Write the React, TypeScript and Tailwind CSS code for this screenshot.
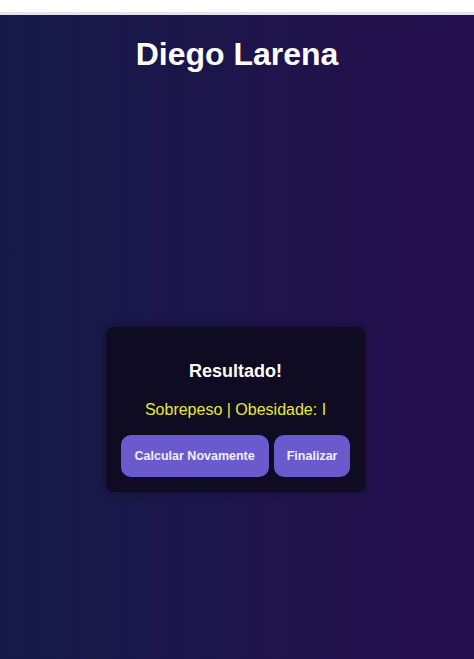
export default function App() {
  return (
    <div className="flex min-h-[659px] flex-col bg-white font-['Liberation_Sans',Arial,sans-serif]">
      <div className="h-[12px] bg-white" />
      <div className="h-[3px] bg-[#e4e4ea]" />
      <main className="flex flex-1 flex-col items-center bg-gradient-to-r from-[#141a48] to-[#250e4e]">
        <h1 className="mt-[21px] text-[32px] font-bold leading-[37px] text-white">Diego Larena</h1>

        <div className="mr-[3px] mt-[254px] flex w-[259px] flex-col items-center rounded-[8px] bg-[#0e0b22] px-[14px] pb-[15px] pt-[34px] shadow-[0_0_8px_rgba(0,0,0,0.35)]">
          <h2 className="text-[18px] font-bold leading-[21px] text-white">Resultado!</h2>
          <p className="mt-[18px] text-[16px] leading-[19px] text-[#e8e83a]">Sobrepeso | Obesidade: I</p>
          <div className="mt-[16px] flex gap-[5px]">
            <button className="h-[42px] whitespace-nowrap rounded-[10px] bg-[#6a5acd] px-[14px] text-[12.5px] font-bold text-[#f1f0fb]">
              Calcular Novamente
            </button>
            <button className="h-[42px] whitespace-nowrap rounded-[10px] bg-[#6a5acd] px-[13px] text-[12.5px] font-bold text-[#f1f0fb]">
              Finalizar
            </button>
          </div>
        </div>
      </main>
    </div>
  );
}
